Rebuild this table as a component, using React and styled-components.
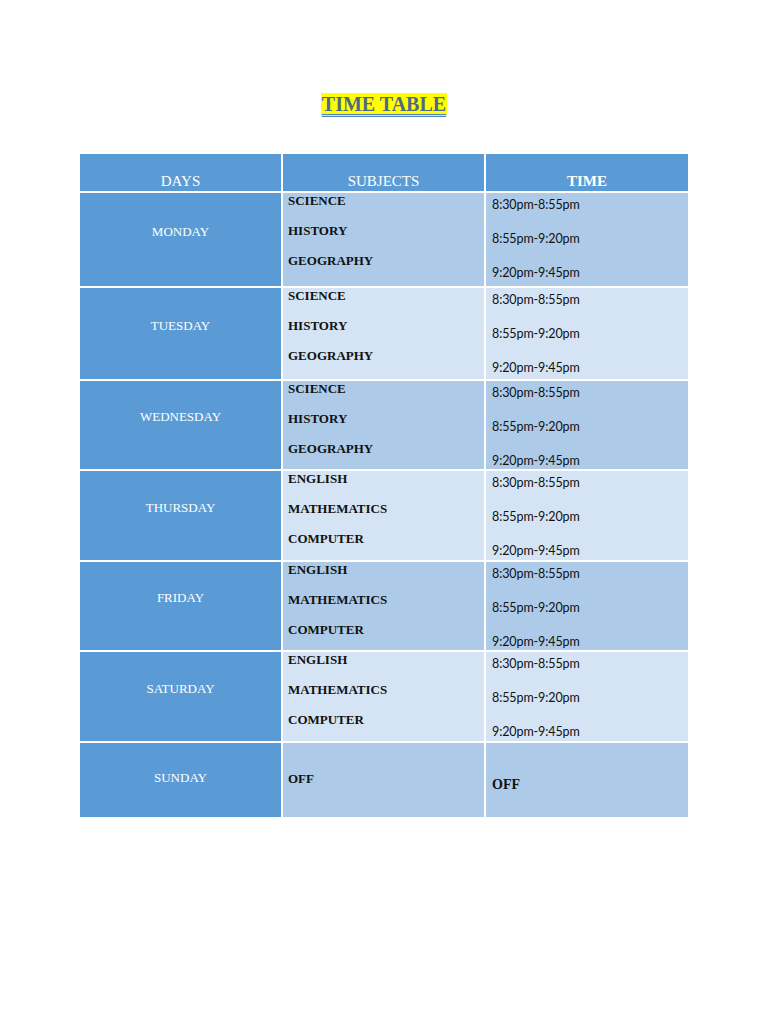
import styled, { createGlobalStyle } from "styled-components";

const GlobalStyle = createGlobalStyle`
    body {
        margin: 0;
        background: #fff;
        font-family: "Liberation Serif", "Times New Roman", serif;
    }
`;

const schedule = [
    { day: "MONDAY", subjects: ["SCIENCE", "HISTORY", "GEOGRAPHY"], height: 93, shade: "dark" },
    { day: "TUESDAY", subjects: ["SCIENCE", "HISTORY", "GEOGRAPHY"], height: 91, shade: "light" },
    { day: "WEDNESDAY", subjects: ["SCIENCE", "HISTORY", "GEOGRAPHY"], height: 88, shade: "dark" },
    { day: "THURSDAY", subjects: ["ENGLISH", "MATHEMATICS", "COMPUTER"], height: 89, shade: "light" },
    { day: "FRIDAY", subjects: ["ENGLISH", "MATHEMATICS", "COMPUTER"], height: 88, shade: "dark" },
    { day: "SATURDAY", subjects: ["ENGLISH", "MATHEMATICS", "COMPUTER"], height: 89, shade: "light" },
];

const times = ["8:30pm-8:55pm", "8:55pm-9:20pm", "9:20pm-9:45pm"];

export default function App() {
    return (
        <Page>
            <GlobalStyle />
            <TitleWrap>
                <Title>TIME TABLE</Title>
            </TitleWrap>

            <Table>
                <HeadCell>DAYS</HeadCell>
                <HeadCell>SUBJECTS</HeadCell>
                <HeadCell bold>TIME</HeadCell>

                {schedule.map(row => (
                    <Row key={row.day}>
                        <DayCell height={row.height} lift={16}>{row.day}</DayCell>
                        <SubjectCell shade={row.shade}>
                            {row.subjects.map(subject => (
                                <Subject key={subject}>{subject}</Subject>
                            ))}
                        </SubjectCell>
                        <TimeCell shade={row.shade}>
                            {times.map(time => (
                                <Time key={time}>{time}</Time>
                            ))}
                        </TimeCell>
                    </Row>
                ))}

                <Row>
                    <DayCell height={74} lift={4}>SUNDAY</DayCell>
                    <OffCell shade="dark">OFF</OffCell>
                    <OffCell shade="dark" shift>OFF</OffCell>
                </Row>
            </Table>
        </Page>
    );
}

const Page = styled.main`
    width: 768px;
    min-height: 1024px;
    padding-top: 93px;
    box-sizing: border-box;
`;

const TitleWrap = styled.div`
    display: flex;
    justify-content: center;
    margin-bottom: 38px;
`;

const Title = styled.h1`
    margin: 0;
    padding: 1px 1px 2px;
    background: #ffff00;
    color: #4d6a86;
    font-size: 20px;
    font-weight: 700;
    line-height: 20px;
    text-decoration: underline double #4f81bd;
    text-underline-offset: 3px;
    text-decoration-thickness: 1px;
`;

const Table = styled.div`
    display: grid;
    grid-template-columns: 201px 201px 202px;
    column-gap: 2px;
    row-gap: 2px;
    margin-left: 80px;
    width: 608px;
`;

const Row = styled.div`
    display: contents;
`;

const HeadCell = styled.div`
    height: 37px;
    background: #5b9bd5;
    color: #fff;
    font-size: 15px;
    font-weight: ${({ bold }) => bold ? 700 : 400};
    display: flex;
    align-items: flex-end;
    justify-content: center;
    padding-bottom: 1px;
    box-sizing: border-box;
`;

const DayCell = styled.div`
    height: ${({ height }) => height}px;
    background: #5b9bd5;
    color: #fff;
    font-size: 13px;
    display: flex;
    align-items: center;
    justify-content: center;
    padding-bottom: ${({ lift }) => lift}px;
    box-sizing: border-box;
`;

const shadeColor = shade => shade === "dark" ? "#adcbe9" : "#d5e4f4";

const SubjectCell = styled.div`
    background: ${({ shade }) => shadeColor(shade)};
    display: flex;
    flex-direction: column;
    gap: 14px;
    padding: 0 0 0 5px;
`;

const Subject = styled.span`
    font-size: 13px;
    font-weight: 700;
    line-height: 16px;
    color: #111;
`;

const TimeCell = styled.div`
    background: ${({ shade }) => shadeColor(shade)};
    display: flex;
    flex-direction: column;
    gap: 18px;
    padding: 4px 0 0 6px;
`;

const Time = styled.span`
    font-family: "Lato", "Liberation Sans", sans-serif;
    font-size: 12.5px;
    line-height: 16px;
    color: #111;
    letter-spacing: -0.1px;
`;

const OffCell = styled.div`
    background: ${({ shade }) => shadeColor(shade)};
    font-size: ${({ shift }) => shift ? 14 : 13}px;
    font-weight: 700;
    color: #111;
    padding: ${({ shift }) => shift ? "34px 0 0 6px" : "28px 0 0 5px"};
`;
